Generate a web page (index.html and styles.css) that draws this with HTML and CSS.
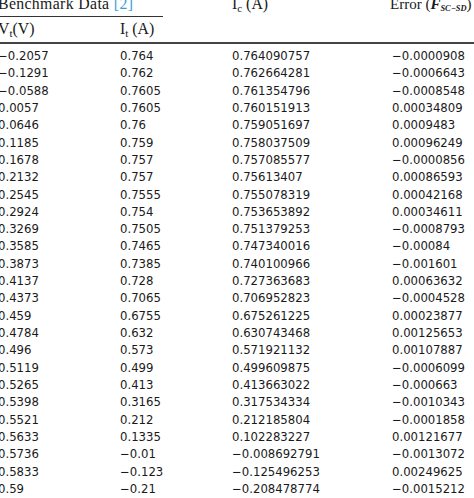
FILE: index.html
```html
<!DOCTYPE html>
<html>
<head>
<meta charset="utf-8">
<link rel="stylesheet" href="styles.css">
</head>
<body>
<div class="table">
  <div class="row head1">
    <div class="group"><span class="group-title">Benchmark Data <span class="ref">[2]</span></span></div>
    <div class="hc">I<sub>c</sub> (A)</div>
    <div class="hc err">Error (<b><i>F<sub class="bsub">SC−SD</sub></i></b>)</div>
  </div>
  <div class="row head2">
    <div class="hc">V<sub>t</sub>(V)</div>
    <div class="hc">I<sub>t</sub> (A)</div>
    <div></div>
    <div></div>
  </div>
  <div class="body">
    <div class="row"><div>−0.2057</div><div>0.764</div><div>0.764090757</div><div>−0.0000908</div></div>
    <div class="row"><div>−0.1291</div><div>0.762</div><div>0.762664281</div><div>−0.0006643</div></div>
    <div class="row"><div>−0.0588</div><div>0.7605</div><div>0.761354796</div><div>−0.0008548</div></div>
    <div class="row"><div>0.0057</div><div>0.7605</div><div>0.760151913</div><div>0.00034809</div></div>
    <div class="row"><div>0.0646</div><div>0.76</div><div>0.759051697</div><div>0.0009483</div></div>
    <div class="row"><div>0.1185</div><div>0.759</div><div>0.758037509</div><div>0.00096249</div></div>
    <div class="row"><div>0.1678</div><div>0.757</div><div>0.757085577</div><div>−0.0000856</div></div>
    <div class="row"><div>0.2132</div><div>0.757</div><div>0.75613407</div><div>0.00086593</div></div>
    <div class="row"><div>0.2545</div><div>0.7555</div><div>0.755078319</div><div>0.00042168</div></div>
    <div class="row"><div>0.2924</div><div>0.754</div><div>0.753653892</div><div>0.00034611</div></div>
    <div class="row"><div>0.3269</div><div>0.7505</div><div>0.751379253</div><div>−0.0008793</div></div>
    <div class="row"><div>0.3585</div><div>0.7465</div><div>0.747340016</div><div>−0.00084</div></div>
    <div class="row"><div>0.3873</div><div>0.7385</div><div>0.740100966</div><div>−0.001601</div></div>
    <div class="row"><div>0.4137</div><div>0.728</div><div>0.727363683</div><div>0.00063632</div></div>
    <div class="row"><div>0.4373</div><div>0.7065</div><div>0.706952823</div><div>−0.0004528</div></div>
    <div class="row"><div>0.459</div><div>0.6755</div><div>0.675261225</div><div>0.00023877</div></div>
    <div class="row"><div>0.4784</div><div>0.632</div><div>0.630743468</div><div>0.00125653</div></div>
    <div class="row"><div>0.496</div><div>0.573</div><div>0.571921132</div><div>0.00107887</div></div>
    <div class="row"><div>0.5119</div><div>0.499</div><div>0.499609875</div><div>−0.0006099</div></div>
    <div class="row"><div>0.5265</div><div>0.413</div><div>0.413663022</div><div>−0.000663</div></div>
    <div class="row"><div>0.5398</div><div>0.3165</div><div>0.317534334</div><div>−0.0010343</div></div>
    <div class="row"><div>0.5521</div><div>0.212</div><div>0.212185804</div><div>−0.0001858</div></div>
    <div class="row"><div>0.5633</div><div>0.1335</div><div>0.102283227</div><div>0.00121677</div></div>
    <div class="row"><div>0.5736</div><div>−0.01</div><div>−0.008692791</div><div>−0.0013072</div></div>
    <div class="row"><div>0.5833</div><div>−0.123</div><div>−0.125496253</div><div>0.00249625</div></div>
    <div class="row"><div>0.59</div><div>−0.21</div><div>−0.208478774</div><div>−0.0015212</div></div>
  </div>
</div>
</body>
</html>
```
FILE: styles.css
```css
html, body {
  margin: 0;
  padding: 0;
  background: #ffffff;
}
body {
  width: 474px;
  height: 498px;
  overflow: hidden;
  color: #1a1a1a;
}
.table {
  margin-left: -2px;
}
.row {
  display: grid;
  grid-template-columns: 122px 112px 160px 1fr;
  white-space: nowrap;
}
.head1, .head2 {
  font-family: "Liberation Serif", serif;
  font-size: 15.8px;
  line-height: 18px;
}
.head1 {
  margin-top: -5px;
}
.group {
  grid-column: span 2;
}
.group-title {
  display: block;
  width: 165px;
  padding-bottom: 3px;
  letter-spacing: 0.35px;
  border-bottom: 1px solid #333;
}
.ref {
  color: #3a9fd5;
}
.err {
  font-size: 15px;
  margin-left: -2px;
}
.head2 {
  padding-top: 3px;
  padding-bottom: 4px;
  border-bottom: 2px solid #444;
}
sub {
  font-size: 0.7em;
  line-height: 0;
  vertical-align: -0.25em;
}
.bsub {
  font-size: 0.56em;
}
.body {
  margin-top: 4px;
  font-family: "DejaVu Sans", sans-serif;
  font-size: 11.7px;
}
.body .row {
  line-height: 17.32px;
  height: 17.32px;
}
```
